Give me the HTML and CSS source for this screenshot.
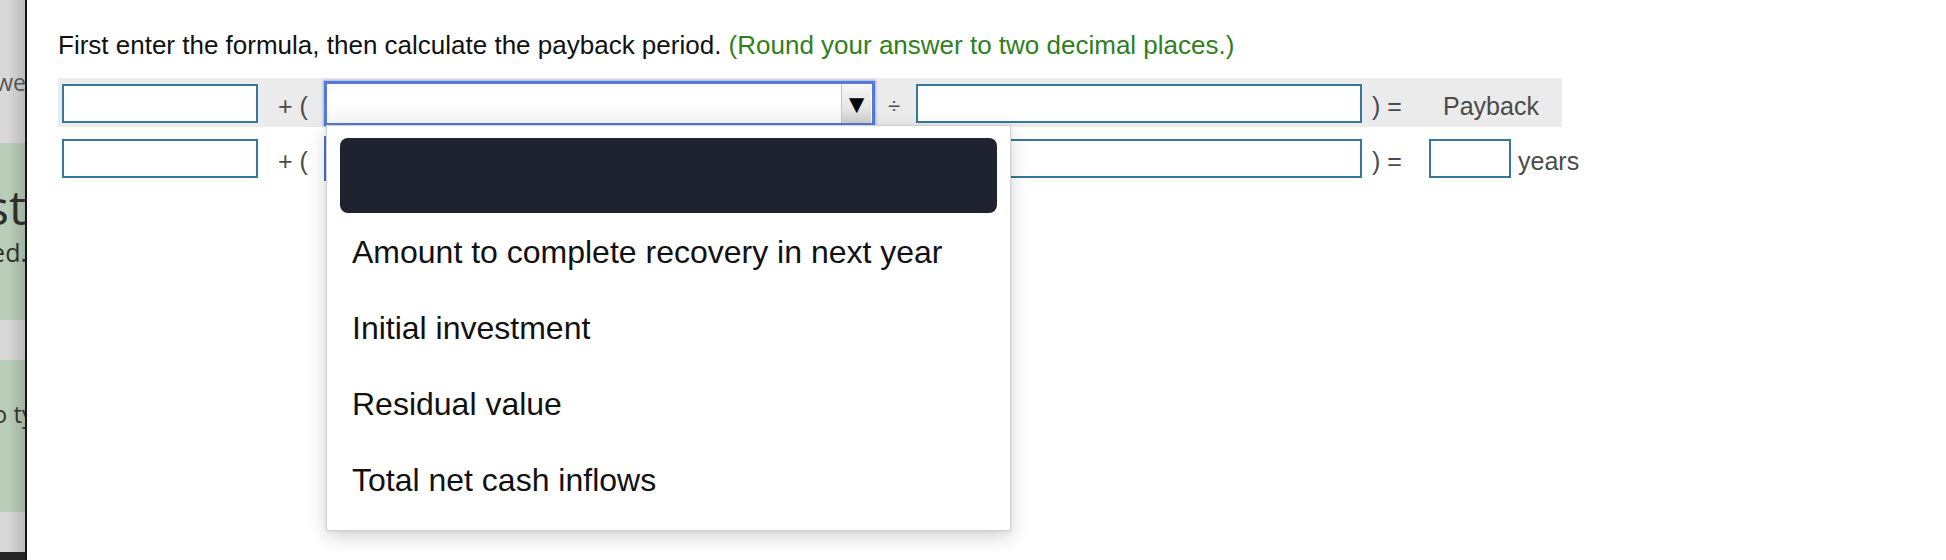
FILE: index.html
```html
<!DOCTYPE html>
<html>
<head>
<meta charset="utf-8">
<link rel="stylesheet" href="styles.css">
</head>
<body>
<div class="page">
  <aside class="backdrop">
    <div class="bd-block bd-gray bd-top"><span class="bd-we">we</span></div>
    <div class="bd-block bd-green bd-g1">
      <span class="bd-st">st</span>
      <span class="bd-ed">ed.</span>
    </div>
    <div class="bd-block bd-gray bd-mid"></div>
    <div class="bd-block bd-green bd-g2"><span class="bd-oty">o ty</span></div>
    <div class="bd-block bd-gray bd-low"></div>
    <div class="bd-block bd-dark"></div>
  </aside>
  <main class="dialog">
    <p class="instr">First enter the formula, then calculate the payback period. <span class="hint">(Round your answer to two decimal places.)</span></p>

    <div class="row row-head">
      <span class="box box-a"></span>
      <span class="op op-plus">+ (</span>
      <div class="select focused">
        <span class="arrow">▼</span>
        <ul class="popup">
          <li class="opt opt-active"></li>
          <li class="opt">Amount to complete recovery in next year</li>
          <li class="opt">Initial investment</li>
          <li class="opt">Residual value</li>
          <li class="opt">Total net cash inflows</li>
        </ul>
      </div>
      <span class="op op-div">÷</span>
      <span class="box box-c"></span>
      <span class="op op-eq op-eq-head">) =</span>
      <span class="label">Payback</span>
    </div>

    <div class="row">
      <span class="box box-a"></span>
      <span class="op op-plus">+ (</span>
      <div class="select"></div>
      <span class="op op-div">÷</span>
      <span class="box box-c"></span>
      <span class="op op-eq">) =</span>
      <span class="box box-small"></span>
      <span class="label label-years">years</span>
    </div>
  </main>
</div>
</body>
</html>
```

FILE: styles.css
```css
html, body {
  margin: 0;
  padding: 0;
  background: #ffffff;
}

.page {
  display: flex;
  width: 1946px;
  height: 560px;
  overflow: hidden;
  font-family: "Liberation Sans", Arial, Helvetica, sans-serif;
}

/* ---------- left backdrop strip ---------- */
.backdrop {
  width: 25px;
  flex: none;
  display: flex;
  flex-direction: column;
  overflow: hidden;
  font-family: "Open Sans", "Liberation Sans", sans-serif;
  color: #3a3a3a;
}

.bd-block {
  display: flex;
  flex-direction: column;
  align-items: flex-end;
  flex: none;
  overflow: hidden;
  white-space: nowrap;
  background-image: linear-gradient(to right, rgba(0,0,0,0) 30%, rgba(0,0,0,0.13) 100%);
}

.bd-gray { background-color: #d8d8d8; }
.bd-green { background-color: #b9ceb8; }

.bd-top { height: 143px; }
.bd-g1 { height: 177px; }
.bd-mid { height: 40px; }
.bd-g2 { height: 152px; }
.bd-low { height: 40px; }
.bd-dark { flex: 1; background: #262626; }

.bd-we {
  flex: none;
  margin-top: 67px;
  margin-right: -1px;
  font-size: 23px;
  line-height: 30px;
  color: #555;
}

.bd-st {
  flex: none;
  margin-top: 36px;
  margin-right: -1px;
  font-size: 48px;
  line-height: 56px;
  color: #2e2e2e;
}

.bd-ed {
  flex: none;
  margin-right: -2px;
  font-size: 25px;
  line-height: 34px;
  color: #2e2e2e;
}

.bd-oty {
  flex: none;
  margin-top: 38px;
  margin-right: -9px;
  font-size: 24px;
  line-height: 32px;
  color: #333;
}

/* ---------- dialog ---------- */
.dialog {
  flex: 1;
  border-left: 2px solid #151515;
  padding: 30px 0 0 31px;
  background: #ffffff;
}

.instr {
  margin: 0;
  font-size: 26px;
  line-height: 30px;
  color: #111;
}

.hint {
  color: #2f7f1c;
}

.row {
  display: flex;
  align-items: center;
  width: 1504px;
  height: 49px;
  box-sizing: border-box;
  padding: 2px 0 0 0;
  margin-top: 6px;
  font-size: 25px;
  color: #4a4a4a;
}

.row-head {
  margin-top: 18px;
  background: #ebebeb;
}

.box {
  flex: none;
  box-sizing: border-box;
  height: 39px;
  border: 2px solid #35789a;
  background: #fff;
}

.box-a { width: 196px; margin-left: 4px; }
.box-c { width: 446px; }
.box-small { width: 82px; }

.op {
  flex: none;
  white-space: pre;
  line-height: 30px;
  padding-top: 5px;
}

.op-plus { margin-left: 20px; width: 46px; }
.op-div { margin-left: 13px; width: 28px; font-size: 22px; }
.op-eq { margin-left: 10px; width: 57px; }
.op-eq-head { width: 71px; }

.label { flex: none; line-height: 30px; padding-top: 5px; }
.label-years { margin-left: 7px; }

/* ---------- select ---------- */
.select {
  flex: none;
  position: relative;
  box-sizing: border-box;
  width: 551px;
  height: 45px;
  border: 2px solid #4c73d3;
  background: #fff;
}

.select.focused {
  border: 3px solid #5479d8;
  box-shadow: 0 0 2px 1px rgba(80, 120, 220, 0.5);
  background: linear-gradient(#fbfbfb, #ffffff 40%, #f7f7f7);
  z-index: 5;
}

.arrow {
  position: absolute;
  right: 1px;
  top: 0;
  bottom: 0;
  width: 30px;
  display: flex;
  align-items: center;
  justify-content: center;
  box-sizing: border-box;
  border-left: 1px solid #c4c4c4;
  background: linear-gradient(#f6f6f6, #e6e6e6 60%, #cfcfcf);
  color: #000;
  font-size: 26px;
  line-height: 1;
}

/* ---------- dropdown list ---------- */
.popup {
  position: absolute;
  left: -1px;
  top: 41px;
  width: 685px;
  box-sizing: border-box;
  margin: 0;
  padding: 12px 13px 12px 13px;
  list-style: none;
  background: #fff;
  border: 1px solid #d2d2d2;
  box-shadow: 0 6px 18px rgba(0, 0, 0, 0.17), 0 1px 3px rgba(0,0,0,0.08);
  z-index: 10;
}

.opt {
  height: 76px;
  display: flex;
  align-items: center;
  padding-left: 12px;
  font-size: 32px;
  color: #111;
  white-space: nowrap;
}

.opt-active {
  height: 75px;
  margin-bottom: 1px;
  background: #1f2330;
  border-radius: 8px;
}
```
